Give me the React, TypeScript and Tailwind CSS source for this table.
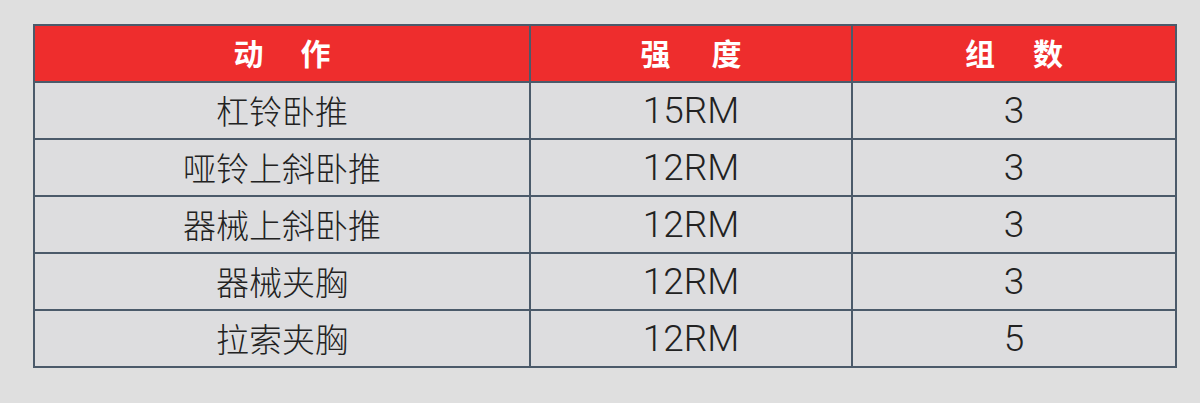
import React from "react";

const rows: [string, string, string][] = [
  ["杠铃卧推", "15RM", "3"],
  ["哑铃上斜卧推", "12RM", "3"],
  ["器械上斜卧推", "12RM", "3"],
  ["器械夹胸", "12RM", "3"],
  ["拉索夹胸", "12RM", "5"],
];

export default function App() {
  return (
    <div className="w-[1200px] h-[403px] bg-[#dfdfdf] pt-[24px] pl-[33px] font-['Noto_Sans_CJK_SC',sans-serif]">
      <div className="w-[1144px] grid grid-cols-[494px_320px_322px] auto-rows-[55px] gap-[2px] p-[2px] bg-[#4b5a6a]">
        <div className="bg-[#ee2d2d] flex items-center justify-center gap-[37px] text-white text-[30px] font-bold pb-[2px]">
          <span>动</span>
          <span>作</span>
        </div>
        <div className="bg-[#ee2d2d] flex items-center justify-center gap-[41px] text-white text-[30px] font-bold pb-[2px]">
          <span>强</span>
          <span>度</span>
        </div>
        <div className="bg-[#ee2d2d] flex items-center justify-center gap-[38px] text-white text-[30px] font-bold pb-[2px]">
          <span>组</span>
          <span>数</span>
        </div>
        {rows.map((r, i) => (
          <React.Fragment key={i}>
            <div className="bg-[#dddddf] flex items-center justify-center text-[#222222] text-[33px] font-light">
              {r[0]}
            </div>
            <div className="bg-[#dddddf] flex items-center justify-center text-[#222222] text-[37px] font-light font-['Roboto','Noto_Sans_CJK_SC',sans-serif]">
              {r[1]}
            </div>
            <div className="bg-[#dddddf] flex items-center justify-center text-[#222222] text-[37px] font-light font-['Roboto','Noto_Sans_CJK_SC',sans-serif]">
              {r[2]}
            </div>
          </React.Fragment>
        ))}
      </div>
    </div>
  );
}
